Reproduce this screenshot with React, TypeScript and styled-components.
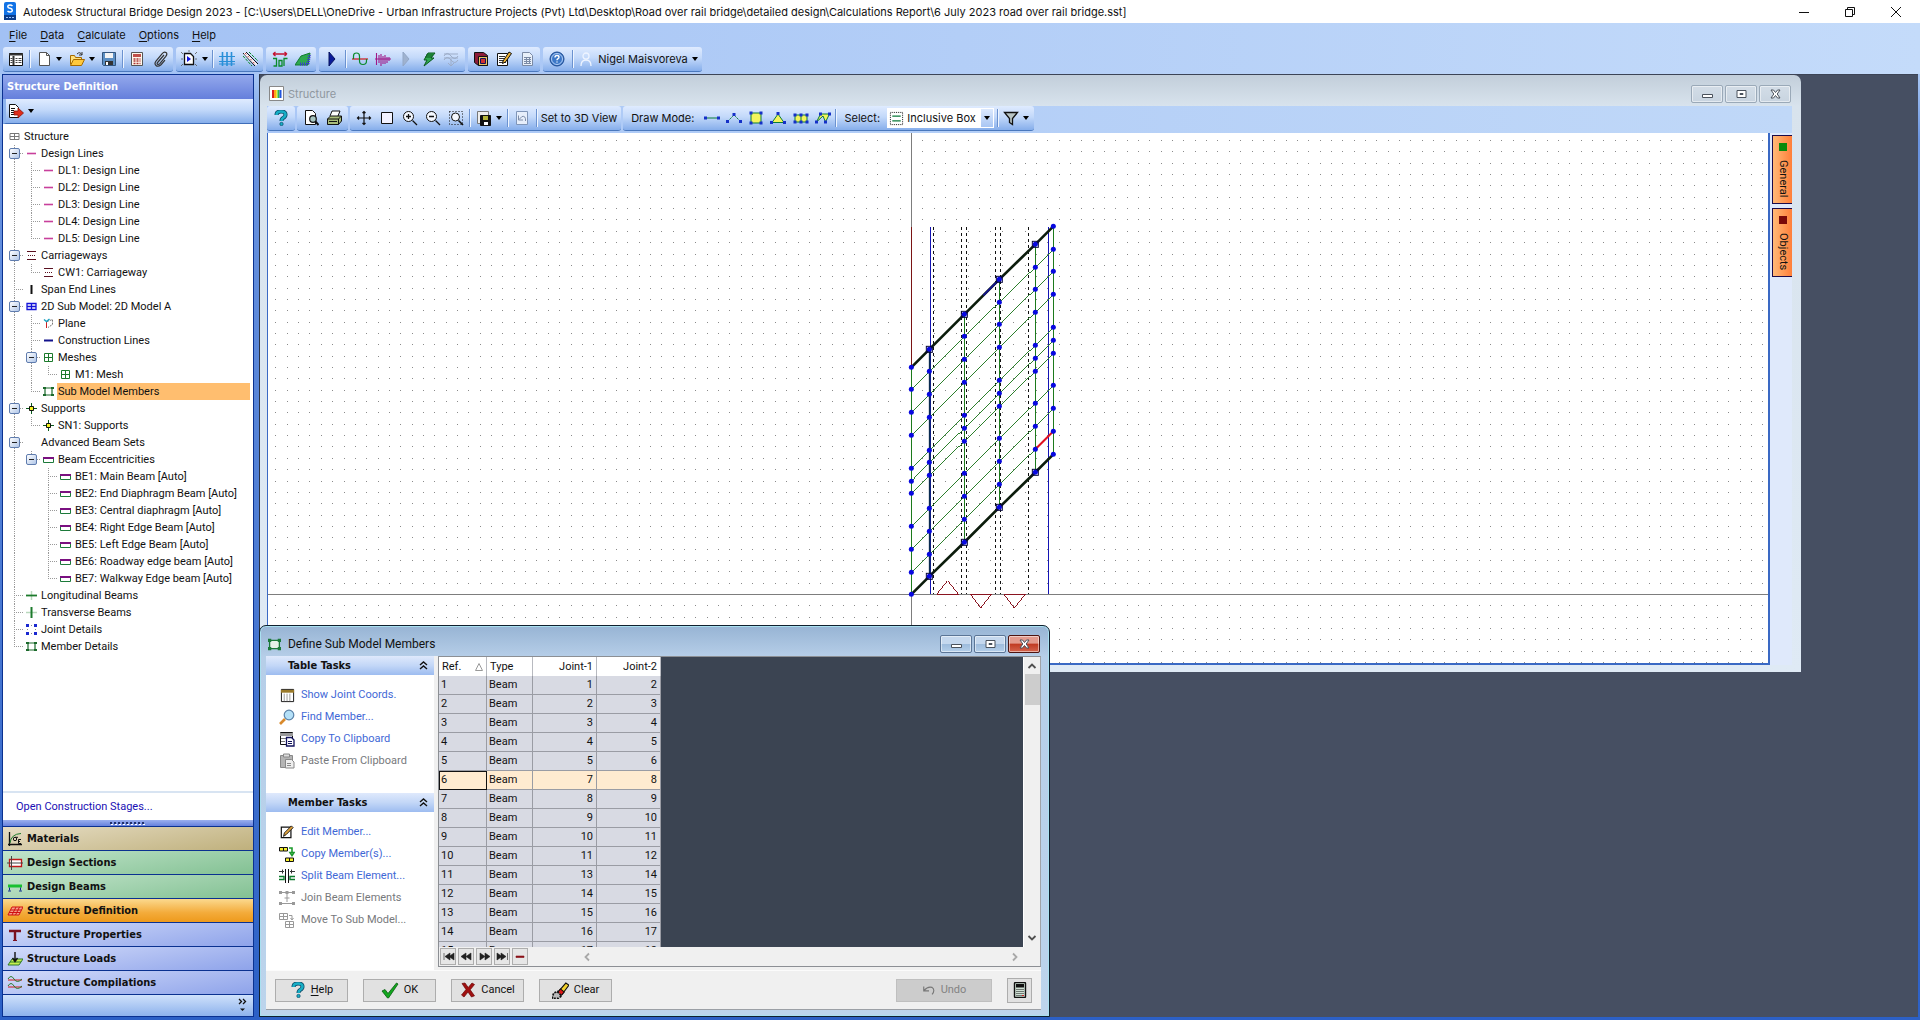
import React from 'react';
import styled, { createGlobalStyle, css } from 'styled-components';

const UI = '"Inter", "Open Sans", sans-serif';
const FORM = '"Roboto", "Liberation Sans", sans-serif';
const HEAVY = '"DejaVu Sans Condensed", "DejaVu Sans", sans-serif';
const BAR = 'linear-gradient(#dfebff, #c3d9fa 45%, #86aeeb)';

const Global = createGlobalStyle`
  * { box-sizing: border-box; }
  body { margin: 0; font: 11px/16px ${FORM}; color: #111; }
  button { font: inherit; color: inherit; margin: 0; padding: 0; border: 0; background: none; }
  svg { display: block; flex: none; }
  u { text-underline-offset: 2px; }
`;

/* ---------- frame ---------- */
const Page = styled.div`
  display: flex;
  flex-direction: column;
  min-height: 100vh;
  background: linear-gradient(90deg, #a2c1f4, #c4dbfa);
`;
const TitleBar = styled.header`
  display: flex;
  align-items: center;
  gap: 6px;
  height: 23px;
  padding: 0 8px 0 3px;
  background: #fff;
  font-family: ${UI};
`;
const TitleText = styled.h1`
  flex: 1;
  margin: 0;
  font: 400 11px/16px ${UI};
  white-space: nowrap;
`;
const SysButtons = styled.div`
  display: flex;
  gap: 14px;
`;
const SysButton = styled.button`
  display: grid;
  place-items: center;
  width: 32px;
  height: 20px;
`;
const MenuBar = styled.nav`
  display: flex;
  gap: 13px;
  height: 23px;
  padding: 4px 9px 0;
  font-family: ${UI};
`;
const MenuItem = styled.button`
  white-space: nowrap;
  height: 16px;
`;
const ToolRow = styled.div`
  display: flex;
  gap: 3px;
  height: 28px;
  padding: 1px 3px 2px;
`;
const ToolGroup = styled.div<{ $w?: number }>`
  display: flex;
  align-items: center;
  justify-content: space-around;
  ${p => p.$w && css`width: ${p.$w}px;`}
  padding: 0 2px;
  border-radius: 3px;
  border-bottom: 1px solid #4a78bd;
  background: ${BAR};
  font-family: ${UI};
  white-space: nowrap;
`;
const Tool = styled.button<{ $drop?: boolean }>`
  display: flex;
  align-items: center;
  justify-content: center;
  gap: 4px;
  height: 22px;
  min-width: ${p => (p.$drop ? 30 : 20)}px;
`;
const Sep = styled.i`
  width: 2px;
  height: 18px;
  border-left: 1px solid #6b92d0;
  background: #eef5ff;
`;
const Caret = styled.i`
  width: 0;
  height: 0;
  border: 3px solid transparent;
  border-top: 4px solid #000;
  border-bottom: 0;
`;
const Main = styled.main`
  flex: 1;
  display: flex;
  gap: 5px;
  padding: 0 2px 3px;
  background: linear-gradient(#a9c8f5, #6a94e0 7%, #2c60c6);
`;

/* ---------- sidebar ---------- */
const Sidebar = styled.aside`
  display: flex;
  flex-direction: column;
  width: 252px;
  border: 1px solid #0a3190;
  background: #fff;
`;
const SideTitle = styled.h2`
  margin: 0;
  height: 24px;
  padding: 0 4px;
  color: #fff;
  background: linear-gradient(#93a8ec, #657fdc);
  font: 700 11px/23px ${HEAVY};
`;
const SideTools = styled.div`
  display: flex;
  align-items: center;
  height: 25px;
  padding: 0 2px;
  border-bottom: 1px solid #3f6db8;
  border-left: 3px solid #8db4ee;
  background: ${BAR};
`;
const Tree = styled.ul`
  flex: 1;
  margin: 0;
  padding: 4px 3px 0;
  list-style: none;
`;
const TreeRow = styled.li`
  display: flex;
  height: 17px;
`;
type GuideKind = 'line' | 'tee' | 'end' | 'none';
const dotsV = 'repeating-linear-gradient(#999 0 1px, transparent 1px 2px)';
const dotsH = 'repeating-linear-gradient(90deg, #999 0 1px, transparent 1px 2px)';
const guides: Record<GuideKind, string> = {
  none: 'none',
  line: `${dotsV} 8px 0 / 1px 17px no-repeat`,
  tee: `${dotsV} 8px 0 / 1px 17px no-repeat, ${dotsH} 8px 8px / 9px 1px no-repeat`,
  end: `${dotsV} 8px 0 / 1px 9px no-repeat, ${dotsH} 8px 8px / 9px 1px no-repeat`,
};
const Guide = styled.span<{ $kind: GuideKind }>`
  flex: none;
  width: 17px;
  background: ${p => guides[p.$kind]};
`;
const Expander = styled.button`
  display: grid;
  place-items: center;
  width: 11px;
  height: 11px;
  margin: 3px;
  border: 1px solid #5f7cae;
  border-radius: 2px;
  background: linear-gradient(135deg, #fff, #b0c6e8);
`;
const TreeIcon = styled.span`
  display: grid;
  place-items: center;
  flex: none;
  width: 17px;
`;
const TreeLabel = styled.span<{ $on?: boolean }>`
  flex: 1;
  padding-left: 1px;
  line-height: 17px;
  white-space: nowrap;
  background: ${p => (p.$on ? '#ffbe6f' : 'none')};
`;
const Stages = styled.div`
  height: 29px;
  padding: 6px 13px 0;
  border-top: 2px solid #d8e4f2;
`;
const StagesLink = styled.a`
  color: #1a10b4;
  text-decoration: none;
`;
const Grip = styled.div`
  display: grid;
  place-items: center;
  height: 6px;
  background: linear-gradient(#9bb0ee, #6681dd);
`;
const navTone = {
  sand: 'linear-gradient(170deg, #e6ddc4, #bfb07c)',
  green: 'linear-gradient(170deg, #c2e4cb, #83c193)',
  gold: 'linear-gradient(#fbd98e, #f3ab3a 60%, #ee9a1c)',
  blue: 'linear-gradient(170deg, #d3dcfa, #8ea3ea)',
};
const NavItem = styled.button<{ $tone: keyof typeof navTone }>`
  display: flex;
  align-items: center;
  gap: 4px;
  height: 24px;
  padding: 0 4px;
  border-top: 1px solid #0a3190;
  background: ${p => navTone[p.$tone]};
  font: 700 11px/16px ${HEAVY};
  text-align: left;
`;
const NavMore = styled.div`
  display: flex;
  justify-content: flex-end;
  height: 22px;
  padding: 3px 6px;
  border-top: 1px solid #0a3190;
  background: linear-gradient(#cfe1fb, #8db2ec);
`;

/* ---------- MDI windows ---------- */
const Desk = styled.section`
  position: relative;
  flex: 1;
  border-top: 1px solid #3c4456;
  border-left: 1px solid #2b3346;
  background: #464f62;
`;
const Win = styled.section<{ $x: number; $y: number; $w: number; $h: number; $active?: boolean }>`
  position: absolute;
  left: ${p => p.$x}px;
  top: ${p => p.$y}px;
  width: ${p => p.$w}px;
  height: ${p => p.$h}px;
  display: flex;
  flex-direction: column;
  padding: ${p => (p.$active ? '0 8px 6px 6px' : '0 9px 7px 7px')};
  border-radius: 7px 7px 0 0;
  background: ${p => (p.$active
    ? 'linear-gradient(#97b4d4, #b6cee8 31px, #bcd4ec)'
    : 'linear-gradient(#c2ceda, #d8e3ed 31px, #dfeaf5)')};
  ${p => p.$active && css`border: 1px solid #10202e; box-shadow: inset 0 0 0 1px #a9e0f0;`}
`;
const WinTitle = styled.div<{ $dim?: boolean }>`
  display: flex;
  align-items: center;
  gap: 4px;
  height: ${p => (p.$dim ? 31 : 30)}px;
  padding: 6px 1px 0 2px;
  color: ${p => (p.$dim ? '#8f979f' : '#111')};
  font-family: ${p => (p.$dim ? UI : FORM)};
  font-size: ${p => (p.$dim ? 11 : 12)}px;
`;
const WinName = styled.h2`
  flex: 1;
  margin: 0;
  font: inherit;
  line-height: 16px;
`;
const WinButtons = styled.div`
  display: flex;
  gap: 2px;
`;
const WinButton = styled.button<{ $tone: 'dim' | 'blue' | 'red' }>`
  display: grid;
  place-items: center;
  width: 32px;
  height: 18px;
  border: 1px solid ${p => ({ dim: '#9aa9b8', blue: '#5b7596', red: '#4d1410' })[p.$tone]};
  border-radius: 2px;
  box-shadow: inset 0 0 0 1px rgba(255, 255, 255, 0.5);
  background: ${p => ({
    dim: 'linear-gradient(#d3dde7, #c8d4e0)',
    blue: 'linear-gradient(#c5d8ee 50%, #9dbbdc 50%, #b4cfea)',
    red: 'linear-gradient(#e39a8d 45%, #c03a22 50%, #d4644e)',
  })[p.$tone]};
`;
const ViewTools = styled.div`
  display: flex;
  gap: 2px;
  height: 27px;
  padding-bottom: 2px;
  background: linear-gradient(90deg, #aac7f6, #c0d8f8);
`;
const Words = styled.span`
  padding: 0 5px;
`;
const Combo = styled.label`
  display: flex;
  align-items: center;
  gap: 3px;
  width: 107px;
  height: 20px;
  padding-left: 2px;
  background: #fff;
`;
const Select = styled.select`
  flex: 1;
  min-width: 0;
  height: 20px;
  padding: 0;
  border: 0;
  appearance: none;
  font: 11px/20px ${UI};
  color: #111;
  background: none;
`;
const ComboDrop = styled.span`
  display: grid;
  place-items: center;
  width: 12px;
  height: 18px;
  margin-right: 1px;
  background: linear-gradient(#dce9fd, #a9c6f3);
`;
const ViewBody = styled.div`
  flex: 1;
  display: flex;
  min-height: 0;
  background: #dfe9fb;
`;
const CanvasBox = styled.div`
  flex: 1;
  min-width: 0;
  overflow: hidden;
  border: solid #3a69c4;
  border-width: 0 2px 2px 1px;
  background: #fff;
`;
const Tabs = styled.div`
  display: flex;
  flex-direction: column;
  gap: 4px;
  width: 22px;
  padding: 2px 0 0 2px;
`;
const Tab = styled.button`
  display: flex;
  align-items: center;
  gap: 9px;
  height: 69px;
  padding: 7px 5px;
  writing-mode: vertical-rl;
  border: 1px solid #1a0a4a;
  border-right: 0;
  background: linear-gradient(90deg, #ffb976, #ff7f3a);
`;
const Swatch = styled.i<{ $c: string }>`
  flex: none;
  width: 8px;
  height: 8px;
  background: ${p => p.$c};
`;

/* ---------- dialog ---------- */
const DialogBody = styled.div`
  flex: 1;
  display: flex;
  gap: 4px;
  min-height: 0;
  background: #f0f0f0;
`;
const Tasks = styled.div`
  width: 168px;
  background: #fff;
`;
const TaskHead = styled.h3`
  display: flex;
  align-items: center;
  justify-content: space-between;
  height: 19px;
  margin: 0 0 9px;
  padding: 0 6px 0 22px;
  background: linear-gradient(#dfe9fc, #c3d7f7 50%, #9dbcf0);
  font: 700 11px/18px ${HEAVY};
`;
const TaskList = styled.ul`
  margin: 0 0 21px;
  padding: 0 0 0 12px;
  list-style: none;
`;
const Task = styled.button`
  display: flex;
  align-items: center;
  gap: 6px;
  height: 22px;
  padding-left: 1px;
  color: #3f68d6;
  white-space: nowrap;
  &:disabled { color: #77797c; }
`;
const GridBox = styled.div`
  flex: 1;
  display: grid;
  grid-template: 1fr 19px / 1fr 17px;
  min-width: 0;
  margin-bottom: 3px;
  border: 1px solid #8c8f94;
  border-right-color: #a0a3a8;
`;
const GridView = styled.div`
  overflow: hidden;
  min-height: 0;
  background: #3b4452;
`;
const DataTable = styled.table`
  width: 222px;
  table-layout: fixed;
  border-collapse: separate;
  border-spacing: 0;
`;
const Th = styled.th<{ $num?: boolean; $w: number }>`
  width: ${p => p.$w}px;
  height: 19px;
  padding: 0 3px;
  border-right: 1px solid #b8bac0;
  background: #fff;
  font-weight: 400;
  line-height: 18px;
  text-align: ${p => (p.$num ? 'right' : 'left')};
`;
const HeadCell = styled.span`
  display: flex;
  align-items: center;
  justify-content: space-between;
`;
const Td = styled.td<{ $num?: boolean; $on: boolean; $focus?: boolean }>`
  height: 19px;
  padding: 0 3px 0 2px;
  border-right: 1px solid #9a9ca4;
  border-bottom: 1px solid #9a9ca4;
  background: ${p => (p.$on ? '#ffebd0' : '#d8dae3')};
  line-height: 18px;
  text-align: ${p => (p.$num ? 'right' : 'left')};
  ${p => p.$focus && css`outline: 1px solid #111; outline-offset: -1px;`}
`;
const ScrollV = styled.div`
  display: flex;
  flex-direction: column;
  align-items: center;
  padding: 4px 1px;
  background: #f0f0f0;
  border-left: 1px solid #fff;
`;
const Thumb = styled.div`
  flex: none;
  width: 15px;
  height: 31px;
  margin-top: 3px;
  background: #cdcdcd;
`;
const Fill = styled.span`
  flex: 1;
`;
const NavBar = styled.div`
  display: flex;
  align-items: center;
  gap: 2px;
  padding: 0 3px 0 1px;
  background: #f0f0f0;
`;
const NavButton = styled.button`
  display: grid;
  place-items: center;
  width: 16px;
  height: 17px;
  border: 1px solid #adadad;
  background: #e6e6e6;
`;
const ScrollH = styled.div`
  flex: 1;
  display: flex;
  justify-content: space-between;
  padding-left: 52px;
`;
const Footer = styled.footer`
  display: flex;
  align-items: center;
  gap: 15px;
  height: 40px;
  padding: 0 9px;
  border-bottom: 1px solid #9b9fa5;
  border-top: 1px solid #fbfbfb;
  background: #f0f0f0;
`;
const Push = styled.button<{ $w: number }>`
  display: flex;
  align-items: center;
  justify-content: center;
  gap: 5px;
  width: ${p => p.$w}px;
  height: ${p => (p.$w < 30 ? 25 : 23)}px;
  border: 1px solid #adadad;
  background: #e1e1e1;
  &:disabled { background: #ccc; border-color: #bfbfbf; color: #838383; }
`;

/* ---------- drawings ---------- */
type P = { children: React.ReactNode; s?: number; v?: string };
const Ic = ({ children, s = 16, v = '0 0 16 16' }: P) => (
  <svg width={s} height={s} viewBox={v} fill="none" stroke="#111" aria-hidden="true">{children}</svg>
);
const page = 'M3.5 1.5h7l3 3v10h-10z';
const hook = 'M3.500 5q0-3.500 4.500-3.500T12.500 4.700q0 2-2.300 3.200Q8.500 8.800 8.500 11';

const I = {
  logo: <svg width="14" height="20" viewBox="0 0 14 20" aria-hidden="true"><path d="M1 2q0-2 2-2h8q2 0 2 2v16H1z" fill="#1273e6" /><path d="M1 13h12v5H1z" fill="#0a3d8c" /><path d="M9.500 4Q8.500 3 7 3 4.800 3 4.800 4.700 4.800 6 7 6.300T9.300 8.300Q9.300 10 7 10 5.500 10 4.500 9" fill="none" stroke="#fff" strokeWidth="1.500" /><path d="M3 15.500h8" stroke="#9cc4ff" strokeDasharray="2 1" /></svg>,
  layout: <Ic><path d="M1.500 2.500h13v12h-13z" fill="#fff" /><path d="M1 3.500h14M5.500 5v9" strokeWidth="2" stroke="#333" /><path d="M7.500 7.500h2m1 0h3m-6 2h2m1 0h3m-6 2h2m1 0h3M2.500 7.500h2m-2 2h2m-2 2h2" stroke="#444" /></Ic>,
  page: <Ic><path d={page} fill="#fff" stroke="#555" /><path d="M10.500 1.500v3h3" stroke="#555" /></Ic>,
  open: <Ic><path d="M1.500 13.500v-9h4l1 2h6v2" fill="#ffe07a" stroke="#a66a00" /><path d="M1.500 14.500l3-6h11l-3 6z" fill="#ffc93c" stroke="#a66a00" /><path d="M8 3q3-3 5 1m0-3v3h-3" stroke="#333" /></Ic>,
  save: <Ic><path d="M1.500 1.500h13v13h-12l-1-1z" fill="#5c8fc4" stroke="#33567f" /><path d="M4 2h8v5H4z" fill="#f4f4f4" stroke="none" /><path d="M4 10h8v4H4z" fill="#333" stroke="none" /><path d="M5 11h2v3H5z" fill="#fff" stroke="none" /></Ic>,
  calcRed: <Ic><path d="M2.500 1.500h11v13h-11z" fill="#fff8ec" stroke="#555" /><path d="M4 3h8v3H4z" fill="#c0504b" stroke="none" /><path d="M4.500 8h7m-7 2h7m-7 2.500h7" stroke="#a33" strokeDasharray="2 1" strokeWidth="1.300" /></Ic>,
  clip: <Ic><path d="M12 4L6 11q-1.500 1.500-.5 2.200t2.300-.6l6-7.200q2-2.600.2-3.800t-3.800 1L4 10q-2 2.800 0 4.500t5-.8l4-4.500" stroke="#333" strokeWidth="1.200" /></Ic>,
  runDoc: <Ic s={18} v="-1 -1 18 18"><path d="M3.500 2.500h6l3 3v8h-9z" fill="#fff" strokeWidth="1.300" /><path d="M6 5v6l4-3z" fill="#1414e0" stroke="none" /><path d="M0 1l2 2M8-1v2M16 1l-2 2M0 8h2M16 8h-2M0 15l2-2M16 15l-2-2" stroke="#555" strokeWidth=".8" /></Ic>,
  fence: <Ic><path d="M0 5.500h16M0 10.500h16M0 13h16" stroke="#2a8fd8" strokeWidth="1.200" /><path d="M3.500 1v14M8 1v14M12.500 1v14" stroke="#2a8fd8" strokeWidth="1.600" /></Ic>,
  road: <Ic><path d="M1 2l12 13M4 1l12 12" stroke="#111" /><path d="M2.500 2l12 12" stroke="#fff" strokeWidth="2" /><path d="M1 5l9 10M7 1l9 9" stroke="#0a8a2a" strokeDasharray="3 1" /><path d="M3 2l11 12" stroke="#c33" strokeDasharray="2 2" /></Ic>,
  spans: <Ic><path d="M2 3h12M1 3l2.500-2M1 3l2.500 2M15 3l-2.500-2M15 3l-2.500 2" stroke="#c41230" strokeWidth="1.300" /><path d="M1 7.500h3.500V15H1.500M7 15V9.500h3V15zM12 15V7.500h3.500" stroke="#0a8a2a" strokeWidth="1.300" /></Ic>,
  surface: <Ic><path d="M0 14L6 5l9-3-2 12z" fill="#2ea84f" stroke="#127a30" /><path d="M5 13h8l1.500-9" fill="none" stroke="#3a3ad0" strokeWidth="3" strokeDasharray="1 1" /></Ic>,
  play: <Ic><path d="M5 1v14l6-7z" fill="#0a1a9a" stroke="#06125c" /></Ic>,
  playOff: <Ic><path d="M5 1v14l6-7z" fill="#9fb2cf" stroke="#93a7c6" /></Ic>,
  wave: <Ic><path d="M0 8h16" stroke="#d01818" strokeWidth="1.200" /><path d="M1.500 8V5q0-3 3-3t3 3v5q0 3.500 3.500 3.500T14.500 10V8" stroke="#0a8a2a" strokeWidth="1.200" /></Ic>,
  pulse: <Ic><path d="M0 8h16M1.500 2v12M4 4v8M6 3v12M8 5v8M10 4v9M12 6v6M14 6v4" stroke="#a01888" strokeWidth="1.100" /></Ic>,
  bolt: <Ic><path d="M7 2h7l-4 5h3L3 15l3-6H3z" fill="#2ea84f" stroke="#0a5a1e" /><path d="M5 4h7M4 6h7" stroke="#0a5a1e" /></Ic>,
  waveOff: <Ic><path d="M1 3h14M1 7h14M8 8v7m-3-3l3 3 3-3" stroke="#9dadc8" /><path d="M1 5q3-5 7 0t7 0M1 9q3-5 7 0t7 0" stroke="#9dadc8" /></Ic>,
  cubes: <Ic><path d="M1.500 1.500h9l4 3v10h-9l-4-3z" fill="#8c1c3a" /><path d="M5.500 5.500h9v9h-9z" fill="#e8c060" /><path d="M7.500 7.500h5v5h-5z" fill="#d03030" stroke="#12125c" /></Ic>,
  note: <Ic><path d="M1.500 2.500h10v12h-10z" fill="#fff" /><path d="M3 5.500h6m-6 2h6m-6 2h5m-5 2h7" stroke="#333" /><path d="M7 10l6-9 2.500 1.500L9.500 11l-3 1.500z" fill="#f1b434" /></Ic>,
  sheetOff: <Ic><path d={page} fill="#e8f0fa" stroke="#7a8aa5" /><path d="M5 6.500h7m-7 2h7m-7 2h7m-7 2h7M7.500 6v7m3-7v7" stroke="#7a8aa5" /></Ic>,
  helpRound: <Ic><circle cx="8" cy="8" r="7" fill="#3c78c8" stroke="#1c4a90" /><circle cx="8" cy="8" r="5.500" stroke="#cfe2ff" strokeWidth=".8" /><path d="M6 6.500q0-2 2-2t2 1.700q0 1-1.200 1.600-.8.500-.8 1.400m0 1.300v1" stroke="#fff" strokeWidth="1.400" /></Ic>,
  person: <Ic><circle cx="8" cy="5" r="3" stroke="#eef4ff" strokeWidth="1.300" /><path d="M3 15q0-6 5-6t5 6" stroke="#eef4ff" strokeWidth="1.300" /></Ic>,
  exit: <Ic><path d="M1.500 1.500h6l3 3v10h-9z" fill="#fff" /><path d="M3 5.500h4m-4 2h3m-3 2h3m-3 2h3" /><path d="M6 8h4V5l5.500 5-5.500 5v-3H6z" fill="#e02c1a" stroke="#8c1208" strokeWidth=".8" /></Ic>,
  rainbow: <svg width="15" height="15" viewBox="0 0 15 15" aria-hidden="true"><path d="M.5.500h14v14H.5z" fill="#fff" stroke="#888" /><path d="M3 4h2v8H3z" fill="#d81e1e" /><path d="M5 4h2v8H5z" fill="#ffa51a" /><path d="M7 4h1.500v8H7z" fill="#f4e82c" /><path d="M8.500 4h2v8h-2z" fill="#35b44a" /><path d="M10.500 4h2v8h-2z" fill="#2255dd" /></svg>,
  question: <Ic><path d={hook} stroke="#0b4a66" strokeWidth="4" /><path d={hook} stroke="#17aec6" strokeWidth="2.600" /><circle cx="8.500" cy="14" r="1.700" fill="#17aec6" stroke="#0b4a66" strokeWidth=".7" /></Ic>,
  preview: <Ic><path d="M2.500.500h7l3 3v11h-10z" fill="#fff" /><circle cx="10" cy="9" r="3.300" fill="#a7c5c0" strokeWidth="1.200" /><path d="M12.500 11.500l3 3.500" strokeWidth="2" /></Ic>,
  print: <Ic><path d="M4 6l2-5h8l-2 5" fill="#fff" /><path d="M1.500 9l3-3h11v5l-3 3.500h-11z" fill="#a9bd7a" /><path d="M1.500 9h11v5.500M12.500 9l3-3M3 11.500h8" /></Ic>,
  move: <Ic><path d="M8 1.500v13M1.500 8h13M6.500 3L8 1.500 9.500 3M6.500 13L8 14.500 9.500 13M3 6.500L1.500 8 3 9.500M13 6.500L14.500 8 13 9.500" strokeWidth="1.200" /></Ic>,
  rect: <Ic><path d="M2.500 2.500h11v11h-11z" fill="#f2f2ff" /></Ic>,
  zoomIn: <Ic><circle cx="6.500" cy="6.500" r="5" fill="#f4f8ff" /><path d="M4 6.500h5M6.500 4v5M10.500 10.500l4.500 4.500" strokeWidth="1.300" /></Ic>,
  zoomOut: <Ic><circle cx="6.500" cy="6.500" r="5" fill="#f4f8ff" /><path d="M4 6.500h5M10.500 10.500l4.500 4.500" strokeWidth="1.300" /></Ic>,
  zoomBox: <Ic><path d="M1.500 1.500h13v13h-13z" strokeDasharray="1 2" /><circle cx="7.500" cy="7" r="4" fill="#f4f8ff" /><path d="M10.500 10.500l4.500 4.500" strokeWidth="1.600" /></Ic>,
  saveView: <Ic><path d="M1.500 1.500h11v12h-11z" fill="#eee" stroke="#777" /><path d="M4.500 5.500h10v10h-10z" fill="#111" /><path d="M7 6h5v4H7z" fill="#b4b43a" stroke="none" /><path d="M8 12h4v3H8z" fill="#fff" stroke="none" /></Ic>,
  backOff: <Ic><path d="M2.500 1.500h11v13h-11z" stroke="#7f95b8" fill="#e6eefb" /><path d="M4.500 5.500v4.500h4.500M5 9.500L8 6.500q4-1 3.500 4.500" stroke="#7c8ca8" /></Ic>,
  filter: <Ic><path d="M1.500 2.500h13L9.500 8.500v6l-3-2v-4z" fill="#b8c4c4" strokeWidth="1.300" /></Ic>,
  incl: <Ic s={15}><path d="M1.500 1.500h13v13h-13z" strokeDasharray="1 1" /><path d="M3.500 5.500h9m-9 5h9" stroke="#0a7a3a" strokeWidth="1.400" /></Ic>,
  undo: <Ic s={14}><path d="M2 4v5h6M2.500 8.500q4-5 9-3.500 4 3 0 8" stroke="#777" strokeWidth="1.300" /></Ic>,
  calc: <Ic s={16}><path d="M3.500.500h9q1 0 1 1v13q0 1-1 1h-9q-1 0-1-1v-13q0-1 1-1z" fill="#cfe0d4" strokeWidth="1.400" /><path d="M4 2h8v3.500H4z" fill="#111" stroke="none" /><path d="M4.500 7.500h7m-7 2h7m-7 2h7m-7 2h7" strokeDasharray="1 1" /><path d="M10 13.500h2" stroke="#d02020" /></Ic>,
  ok: <Ic s={18} v="0 0 18 18"><path d="M1 10l3-1.500 3 4L15.500 2 17 3 7.500 17h-1z" fill="#12a81e" stroke="#0a5a10" strokeWidth=".8" /></Ic>,
  cancel: <Ic><path d="M2 1.500l3-.5 3.200 4.500L12 1l2.500 1.500-4.300 5.300 4.300 6-3 1.200-3.500-5-4 5L1.500 13 6 7.500z" fill="#a01010" stroke="#6a0606" strokeWidth=".7" /></Ic>,
  clear: <Ic s={17}><path d="M6 9l7-8 3 2-6.500 8.500z" fill="#f4d22c" /><path d="M5 10l3-3.500 3.500 3L8.500 13z" fill="#e01818" /><path d="M0 15.500l1.500-5L5 9l4 4-3 2.500z" fill="#bbb" stroke="#111" strokeWidth="1.600" strokeDasharray="2 1" /></Ic>,
  form: <Ic s={15}><path d="M1.500 1.500h13v13h-13z" fill="#fff" /><path d="M1 2h14v3H1z" fill="#9a7a2a" stroke="none" /><path d="M4.500 6v8m3-8v8m3-8v8" stroke="#999" /></Ic>,
  find: <Ic><path d="M1 15l5-5" stroke="#d98a2c" strokeWidth="2.600" /><circle cx="10" cy="6" r="4.800" fill="#b4e0f8" stroke="#5a82a8" strokeWidth="1.200" /></Ic>,
  copy: <Ic><path d="M1.500 1.500h12v12h-12z" fill="#fff" /><path d="M1 2h13v3H1z" fill="#999" stroke="none" /><path d="M2 7.500h5m-5 3h4" stroke="#777" /><path d="M7.500 6.500h5l2.500 2.500v6H7.500z" fill="#fff" stroke="#12125c" strokeWidth="1.300" /><path d="M9 10.500h4m-4 2h4" stroke="#12125c" /></Ic>,
  paste: <Ic><path d="M1.500 2.500h12v12h-12z" fill="#b4b4b4" stroke="#888" /><path d="M4.500 1h6v3h-6z" fill="#ddd" stroke="#888" /><path d="M6.500 6.500h6l2.500 2.500v6H6.500z" fill="#eee" stroke="#888" /><path d="M8 10.500h4m-4 2h4" stroke="#888" /></Ic>,
  edit: <Ic s={14}><path d="M1.500 2.500h11v12h-11z" fill="#fff" strokeWidth="1.400" /><path d="M4 13l1-4 8-8 2 2-8 8z" fill="#e0a23c" /></Ic>,
  copyM: <Ic><path d="M.5 1.500h4v3.500h-4zM4.500 1.500h4v3.500h-4zM6.500 12h4v3.500h-4zM10.500 12h4v3.500h-4z" fill="#f6f02c" /><path d="M10 2h3V7m-2-.5l2 3 2-3z" stroke="#1c9a2c" strokeWidth="1.600" /></Ic>,
  split: <Ic><path d="M6.500 1v14M9.500 1v14" /><path d="M0 3.500h5M3.500 1.500v4M11 3.500h5M12.500 1.500v4" stroke="#333" /><path d="M0 8.500h5v3H0m16-3h-5v3h5" stroke="#0a7a2a" strokeWidth="1.400" /></Ic>,
  join: <Ic><path d="M1 2.500h14M1 13.500h14M8 4v8M5.500 8h5" stroke="#999" /><path d="M0 1h3v3H0zM6.500 1h3v3h-3zM13 1h3v3h-3zM0 12h3v3H0zM13 12h3v3h-3z" fill="#999" stroke="none" /></Ic>,
  moveOff: <Ic><path d="M.5 1.500h8v6h-8zM.5 4.500h8M4.500 1.500v6M6.500 9.500h8v6h-8zM6.500 12.500h8M10.500 9.500v6" stroke="#999" /><path d="M10 3.500h3v4m-1.500-1.500L13 8l1.500-2" stroke="#999" /></Ic>,
  link: <Ic s={13}><path d="M2 3h12v10H2z" stroke="#1c7a3a" strokeWidth="1.600" fill="#e6f0e8" /><path d="M0 1h4v4H0zM12 1h4v4h-4zM0 11h4v4H0zM12 11h4v4h-4z" fill="#1c7a3a" stroke="none" /></Ic>,
  chev: <svg width="9" height="9" viewBox="0 0 9 9" fill="none" stroke="#111" strokeWidth="1.400" aria-hidden="true"><path d="M1 4l3.500-3L8 4M1 8l3.500-3L8 8" /></svg>,
};

const draw = {
  line: <Ic><path d="M1 8h14" stroke="#0a7a3a" /><path d="M0 6.500h3v3H0zM13 6.500h3v3h-3z" fill="#1430c8" stroke="none" /></Ic>,
  poly: <Ic><path d="M2 11l6-6 6 6" stroke="#0a7a3a" strokeDasharray="2 1" /><path d="M0 10h3v3H0zM6.500 3h3v3h-3zM13 10h3v3h-3z" fill="#1430c8" stroke="none" /></Ic>,
  box: <Ic><path d="M3 3h10v10H3z" fill="#f4f45c" stroke="#0a7a3a" /><path d="M1.500 1.500h3v3h-3zM11.500 1.500h3v3h-3zM1.500 11.500h3v3h-3zM11.500 11.500h3v3h-3z" fill="#1430c8" stroke="none" /></Ic>,
  tri: <Ic><path d="M2 12.500L8 4l6 8.500z" fill="#f4f45c" stroke="#0a7a3a" /><path d="M0 11h3v3H0zM6.500 2h3v3h-3zM13 11h3v3h-3z" fill="#1430c8" stroke="none" /></Ic>,
  pair: <Ic><path d="M2 5h12v7H2zM8 5v7" fill="#f4f45c" stroke="#0a7a3a" /><path d="M.5 3.500h3v3h-3zM6.500 3.500h3v3h-3zM12.500 3.500h3v3h-3zM.5 10.500h3v3h-3zM6.500 10.500h3v3h-3zM12.500 10.500h3v3h-3z" fill="#1430c8" stroke="none" /></Ic>,
  skew: <Ic><path d="M1.500 12L5.500 4h9l-4 8L8 6z" fill="#f4f45c" stroke="#0a7a3a" /><path d="M0 10.500h3v3H0zM4 2.500h3v3H4zM13 2.500h3v3h-3zM9 10.500h3v3H9z" fill="#1430c8" stroke="none" /></Ic>,
};

const T = (c: React.ReactNode) => <Ic s={11} v="0 0 11 11">{c}</Ic>;
const treeIcons: Record<string, React.ReactNode> = {
  none: null,
  root: T(<path d="M1 2.500h9v6H1zM1 5.500h9M5.500 2.500v6" stroke="#777" />),
  dl: T(<path d="M1 5.500h9" stroke="#c8409c" strokeWidth="1.600" />),
  cw: T(<><path d="M1 1.500h9M1 9.500h9" stroke="#5a1020" /><path d="M2 5.500h8" stroke="#5a1020" strokeDasharray="1 1" /></>),
  span: T(<path d="M5.500 1v9" strokeWidth="2" />),
  model: T(<path d="M1 2.500h9v6H1zM1 5.500h9M5.500 2.500v6" stroke="#1414d8" strokeWidth="1.300" />),
  plane: T(<><path d="M4 3.500L9.500 1.500v5L5 9.500" stroke="#777" strokeDasharray="2 1" /><path d="M3.500 3v7" stroke="#d02020" /><path d="M1 1.500l2.500 2 3-2.500" stroke="#18a0c0" strokeWidth="1.400" /></>),
  con: T(<path d="M1 5.500h9" stroke="#12128c" strokeWidth="2" />),
  mesh: T(<path d="M1.500 1.500h8v8h-8zM1.500 5.500h8M5.500 1.500v8" stroke="#1c7a2c" />),
  member: T(<><path d="M1.500 2h8M1.500 9h8M2 1.500v8M9 1.500v8" stroke="#1c6a2c" strokeWidth="1.200" /><path d="M0 1h3v2H0zM8 1h3v2H8zM0 8h3v2H0zM8 8h3v2H8z" fill="#1c6a2c" stroke="none" /></>),
  sup: T(<><path d="M5.500 0v11M0 5.500h11" stroke="#0a5a1a" /><path d="M3.500 3.500h4v4h-4z" fill="#f4f020" /></>),
  be: T(<><path d="M.5 3.500h10v5H.5z" fill="#fff" stroke="#1c7a3a" /><path d="M0 4h11" stroke="#7a1080" strokeWidth="2" /></>),
  lng: T(<><path d="M5.500 1v9" stroke="#b8d8bc" strokeWidth="1.500" /><path d="M0 5.500h11" stroke="#1c7a2c" strokeWidth="1.800" /></>),
  trn: T(<><path d="M0 5.500h11" stroke="#b8d8bc" strokeWidth="1.500" /><path d="M5.500 0v11" stroke="#1c7a2c" strokeWidth="2" /></>),
  joint: T(<><path d="M2 1.500h8M2 9.500h8M1.500 2v8M9.500 2v8" stroke="#888" strokeDasharray="1 2" /><path d="M0 0h3v3H0zM8 0h3v3H8zM0 8h3v3H0zM8 8h3v3H8z" fill="#1a28d0" stroke="none" /></>),
};

/* level, icon, label, expandable */
const tree: [number, string, string, boolean?][] = [
  [0, 'root', 'Structure'],
  [1, 'dl', 'Design Lines', true],
  [2, 'dl', 'DL1: Design Line'],
  [2, 'dl', 'DL2: Design Line'],
  [2, 'dl', 'DL3: Design Line'],
  [2, 'dl', 'DL4: Design Line'],
  [2, 'dl', 'DL5: Design Line'],
  [1, 'cw', 'Carriageways', true],
  [2, 'cw', 'CW1: Carriageway'],
  [1, 'span', 'Span End Lines'],
  [1, 'model', '2D Sub Model: 2D Model A', true],
  [2, 'plane', 'Plane'],
  [2, 'con', 'Construction Lines'],
  [2, 'mesh', 'Meshes', true],
  [3, 'mesh', 'M1: Mesh'],
  [2, 'member', 'Sub Model Members'],
  [1, 'sup', 'Supports', true],
  [2, 'sup', 'SN1: Supports'],
  [1, 'none', 'Advanced Beam Sets', true],
  [2, 'be', 'Beam Eccentricities', true],
  [3, 'be', 'BE1: Main Beam [Auto]'],
  [3, 'be', 'BE2: End Diaphragm Beam [Auto]'],
  [3, 'be', 'BE3: Central diaphragm [Auto]'],
  [3, 'be', 'BE4: Right Edge Beam [Auto]'],
  [3, 'be', 'BE5: Left Edge Beam [Auto]'],
  [3, 'be', 'BE6: Roadway edge beam [Auto]'],
  [3, 'be', 'BE7: Walkway Edge beam [Auto]'],
  [1, 'lng', 'Longitudinal Beams'],
  [1, 'trn', 'Transverse Beams'],
  [1, 'joint', 'Joint Details'],
  [1, 'member', 'Member Details'],
];

function continues(row: number, level: number) {
  for (let j = row + 1; j < tree.length; j++) {
    if (tree[j][0] < level) return false;
    if (tree[j][0] === level) return true;
  }
  return false;
}
function guideFor(row: number, col: number): GuideKind {
  const more = continues(row, col + 1);
  if (col === tree[row][0] - 1) return more ? 'tee' : 'end';
  return more ? 'line' : 'none';
}

const nav: [keyof typeof navTone, string, React.ReactNode][] = [
  ['sand', 'Materials', <><path d="M2.500 1v14M1 13.500h14" strokeWidth="1.300" /><path d="M3 12Q4 3 14 2.500" stroke="#1c7a2c" /><circle cx="8" cy="8" r="1.700" /><path d="M8 6.300h3M14 8.500h-2.500v4H14m-2.500-2H13" /></>],
  ['green', 'Design Sections', <><path d="M2.500 4.500h12v7h-12z" stroke="#c01818" fill="#fff" strokeWidth="1.300" /><path d="M0 8h16M4.500 1v14" stroke="#444" /></>],
  ['green', 'Design Beams', <><path d="M1 7h14" stroke="#18c030" strokeWidth="3" /><path d="M2.500 8.500v3m11-3v3M1 12h3m8 0h3" stroke="#12308c" /></>],
  ['gold', 'Structure Definition', <><path d="M1 12l4-8h11l-4 8z" fill="#f5a08a" stroke="#d01010" /><path d="M2 9.500h11M3.500 7h11M5 12l4-8M8.500 12l4-8" stroke="#d01010" /></>],
  ['blue', 'Structure Properties', <><path d="M2 4h12M8 4v9" stroke="#7a1020" strokeWidth="2.400" /><path d="M6 13.500h4" stroke="#7a1020" /></>],
  ['blue', 'Structure Loads', <><path d="M1 14l4-6h11l-4 6z" fill="#c8ee50" stroke="#2c7a2c" /><path d="M3 11h11" stroke="#2c7a2c" /><path d="M8 1v9M5.500 7L8 10.500 10.500 7" strokeWidth="1.400" /></>],
  ['blue', 'Structure Compilations', <><path d="M1 5h14M1 12h14" stroke="#d01818" /><path d="M1 4q3-5 6 0t8 0M1 11q3-5 6 0t8 0" stroke="#2c7a2c" /></>],
];

/* joint coordinates of the skewed deck, three units to a pixel */
const cols = [94, 148, 253, 358, 466, 520];
const joints = [
  [502, 568, 637, 706, 805, 844, 880, 979, 1048, 1117, 1183],
  [448, 514, 583, 652, 751, 787, 826, 925, 994, 1063, 1129],
  [343, 409, 478, 547, 646, 685, 724, 820, 889, 958, 1027],
  [238, 307, 373, 442, 541, 580, 619, 715, 784, 853, 922],
  [133, 202, 268, 337, 436, 475, 514, 610, 679, 748, 817],
  [79, 148, 214, 283, 382, 421, 460, 556, 625, 694, 763],
];
const AXIS_X = 643;
const AXIS_Y = 461;
const STEP = 11.35;
let dotPath = '';
for (let j = -40; j <= 17; j++) {
  for (let i = -56; i <= 76; i++) {
    dotPath += `M${Math.round(AXIS_X + i * STEP)} ${Math.round(AXIS_Y + j * STEP)}h1`;
  }
}
const rowPoints = (r: number) => cols.map((x, c) => `${x},${joints[c][r]}`).join(' ');

function Drawing() {
  return (
    <svg width="1500" height="532" viewBox="0 0 1500 532" fill="none" role="img" aria-label="Plan of the bridge deck">
      <path d={dotPath} stroke="#8a8a8a" transform="translate(0 .5)" shapeRendering="crispEdges" />
      <path d={`M0 ${AXIS_Y}.5H1500M${AXIS_X}.5 0V532`} stroke="#7d7d7d" />
      <g transform="translate(612 67) scale(.33333)">
        <g shapeRendering="crispEdges" strokeWidth="3">
          <path d="M95 81V502" stroke="#7a1414" />
          <path d="M160 81V1183M245 81V1183M260 81V1183M347 81V1183M361 81V1183M446 81V1183" stroke="#111" strokeDasharray="9 9" />
          {cols.map((x, c) => <path key={x} d={`M${x} ${joints[c][0]}V${joints[c][10]}`} stroke="#1c7a1c" />)}
          <path d="M151 81V1183M506 81V1183" stroke="#1414b4" />
          {joints[0].map((_, r) => (r > 0 && r < 10) && <polyline key={r} points={rowPoints(r)} stroke="#2c7f2c" />)}
          <path d="M170 1183L203 1142L236 1183zM272 1183H334L302 1224zM372 1183H436L403 1224z" stroke="#8a1420" />
        </g>
        <path d="M149 448V1129" stroke="#0a2a50" strokeWidth="5" />
        <polyline points={rowPoints(0)} stroke="#0c1c0c" strokeWidth="8" />
        <polyline points={rowPoints(10)} stroke="#0c1c0c" strokeWidth="8" />
        <path d="M310 286L358 238" stroke="#14148c" strokeWidth="6" />
        <path d="M466 748L520 694" stroke="#e01020" strokeWidth="6" />
        {[1, 2, 3, 4].map(c => [0, 10].map(r => (
          <rect key={`${c}-${r}`} x={cols[c] - 9} y={joints[c][r] - 9} width="18" height="18" stroke="#06063c" strokeWidth="3" />
        )))}
        {joints.map((ys, c) => ys.map(y => <circle key={`${c}-${y}`} cx={cols[c]} cy={y} r="7.500" fill="#0808e0" />))}
      </g>
    </svg>
  );
}

const glyph = {
  min: <path d="M2.500 5.500h10v3h-10z" />,
  max: <path d="M3 1.500h9v7H3zM6 4.500h3v1H6z" />,
  close: <path d="M3 1h2.500l2 2.500 2-2.500H12L9.200 5 12 9H9.500l-2-2.500L5.500 9H3l2.800-4z" />,
};
function WinControls({ active }: { active?: boolean }) {
  return (
    <WinButtons>
      {(['min', 'max', 'close'] as const).map(k => (
        <WinButton key={k} aria-label={k} $tone={!active ? 'dim' : k === 'close' ? 'red' : 'blue'}>
          <svg width="15" height="10" viewBox="0 0 15 10" fill="#fff" stroke="#4a525c">{glyph[k]}</svg>
        </WinButton>
      ))}
    </WinButtons>
  );
}

const rows = [[1, 2], [2, 3], [3, 4], [4, 5], [5, 6], [7, 8], [8, 9], [9, 10], [10, 11], [11, 12], [13, 14], [14, 15], [15, 16], [16, 17], [17, 18]];
const tableTasks: [string, React.ReactNode, boolean?][] = [
  ['Show Joint Coords.', I.form], ['Find Member...', I.find], ['Copy To Clipboard', I.copy], ['Paste From Clipboard', I.paste, true],
];
const memberTasks: [string, React.ReactNode, boolean?][] = [
  ['Edit Member...', I.edit], ['Copy Member(s)...', I.copyM], ['Split Beam Element...', I.split], ['Join Beam Elements', I.join, true], ['Move To Sub Model...', I.moveOff, true],
];
const IconSlot = styled.span`
  display: grid;
  place-items: center;
  width: 16px;
`;
function TaskGroup({ title, items }: { title: string; items: [string, React.ReactNode, boolean?][] }) {
  return (
    <>
      <TaskHead>{title}{I.chev}</TaskHead>
      <TaskList>
        {items.map(([t, icon, off]) => <li key={t}><Task disabled={off}><IconSlot>{icon}</IconSlot>{t}</Task></li>)}
      </TaskList>
    </>
  );
}

const recs: [string, string, string][] = [
  ['First', 'M2 2v7M8 2v7L3 5.500zM12 2v7L7 5.500z', '#222'],
  ['Previous', 'M6 2v7L1 5.500zM11 2v7L6 5.500z', '#222'],
  ['Next', 'M2 2v7l5-3.500zM7 2v7l5-3.500z', '#222'],
  ['Last', 'M1 2v7l5-3.500zM5 2v7l5-3.500zM11.500 2v7', '#222'],
  ['Delete', 'M2 5h8v1.500H2z', '#8a1018'],
];
const Arrow = ({ d, c = '#505050' }: { d: string; c?: string }) => (
  <svg width="10" height="10" viewBox="0 0 10 10" fill="none" stroke={c} strokeWidth="1.800"><path d={d} /></svg>
);
const B = ({ i, d, n }: { i: React.ReactNode; d?: boolean; n: string }) => (
  <Tool $drop={d} aria-label={n}>{i}{d && <Caret />}</Tool>
);

export default function App() {
  return (
    <Page>
      <Global />
      <TitleBar>
        {I.logo}
        <TitleText>Autodesk Structural Bridge Design 2023 - [C:\Users\DELL\OneDrive - Urban Infrastructure Projects (Pvt) Ltd\Desktop\Road over rail bridge\detailed design\Calculations Report\6 July 2023 road over rail bridge.sst]</TitleText>
        <SysButtons>
          <SysButton aria-label="Minimise"><svg width="10" height="10" stroke="#111"><path d="M0 5.500h10" /></svg></SysButton>
          <SysButton aria-label="Restore"><svg width="10" height="10" fill="none" stroke="#111"><path d="M.5 2.500h7v7h-7zM2.500 2V.5h7v7H8" /></svg></SysButton>
          <SysButton aria-label="Close"><svg width="10" height="10" stroke="#111"><path d="M0 0l10 10M10 0L0 10" /></svg></SysButton>
        </SysButtons>
      </TitleBar>
      <MenuBar>
        {['File', 'Data', 'Calculate', 'Options', 'Help'].map(m => <MenuItem key={m}><u>{m[0]}</u>{m.slice(1)}</MenuItem>)}
      </MenuBar>
      <ToolRow>
        <ToolGroup $w={170}>
          <B n="Layout" i={I.layout} /><Sep /><B n="New" i={I.page} d /><B n="Open" i={I.open} d /><B n="Save" i={I.save} /><Sep /><B n="Report" i={I.calcRed} /><B n="Attach" i={I.clip} />
        </ToolGroup>
        <ToolGroup $w={87}><B n="Run" i={I.runDoc} d /><Sep /><B n="Grid" i={I.fence} /><B n="Road" i={I.road} /></ToolGroup>
        <ToolGroup $w={50}><B n="Spans" i={I.spans} /><B n="Surface" i={I.surface} /></ToolGroup>
        <ToolGroup $w={146}>
          <B n="Analyse" i={I.play} /><Sep /><B n="Wave" i={I.wave} /><B n="Pulse" i={I.pulse} /><B n="Step" i={I.playOff} /><B n="Quick" i={I.bolt} /><B n="Envelope" i={I.waveOff} />
        </ToolGroup>
        <ToolGroup $w={72}><B n="Results" i={I.cubes} /><B n="Notes" i={I.note} /><B n="Sheet" i={I.sheetOff} /></ToolGroup>
        <ToolGroup $w={159}><B n="Help" i={I.helpRound} /><Sep /><Tool>{I.person}Nigel Maisvoreva<Caret /></Tool></ToolGroup>
      </ToolRow>
      <Main>
        <Sidebar>
          <SideTitle>Structure Definition</SideTitle>
          <SideTools><Tool aria-label="Export">{I.exit}<Caret /></Tool></SideTools>
          <Tree>
            {tree.map(([level, icon, label, open], r) => (
              <TreeRow key={label}>
                {Array.from({ length: level }, (_, c) => (
                  <Guide key={c} $kind={guideFor(r, c)}>
                    {open && c === level - 1 && <Expander aria-label={`Collapse ${label}`}><svg width="5" height="1"><path d="M0 0h5v1H0z" fill="#222" /></svg></Expander>}
                  </Guide>
                ))}
                <TreeIcon>{treeIcons[icon]}</TreeIcon>
                <TreeLabel $on={label === 'Sub Model Members'}>{label}</TreeLabel>
              </TreeRow>
            ))}
          </Tree>
          <Stages><StagesLink href="#stages">Open Construction Stages...</StagesLink></Stages>
          <Grip><svg width="36" height="3"><path d="M0 1h36" stroke="#20306c" strokeWidth="2" strokeDasharray="2 2" /><path d="M1 2.500h36" stroke="#fff" strokeDasharray="2 2" /></svg></Grip>
          {nav.map(([tone, label, icon]) => <NavItem key={label} $tone={tone}><Ic>{icon}</Ic>{label}</NavItem>)}
          <NavMore>
            <svg width="9" height="15" viewBox="0 0 9 15" fill="none" stroke="#111" strokeWidth="1.300"><path d="M1 1l2.500 2.500L1 6M5 1l2.500 2.500L5 6" /><path d="M2 10.500h5l-2.500 2.500z" fill="#111" stroke="none" /></svg>
          </NavMore>
        </Sidebar>
        <Desk>
          <Win $x={0} $y={0} $w={1541} $h={597}>
            <WinTitle $dim>{I.rainbow}<WinName>Structure</WinName><WinControls /></WinTitle>
            <ViewTools>
              <ToolGroup $w={28}><B n="Help" i={I.question} /></ToolGroup>
              <ToolGroup $w={51}><B n="Preview" i={I.preview} /><B n="Print" i={I.print} /></ToolGroup>
              <ToolGroup $w={271}>
                <B n="Pan" i={I.move} /><B n="Fit" i={I.rect} /><B n="Zoom in" i={I.zoomIn} /><B n="Zoom out" i={I.zoomOut} /><B n="Zoom window" i={I.zoomBox} /><Sep /><B n="Save view" i={I.saveView} d /><Sep /><B n="Previous view" i={I.backOff} /><Sep /><Tool>Set to 3D View</Tool>
              </ToolGroup>
              <ToolGroup $w={411}>
                <Words>Draw Mode:</Words>
                <B n="Line" i={draw.line} /><B n="Polyline" i={draw.poly} /><B n="Box" i={draw.box} /><B n="Triangle" i={draw.tri} /><B n="Pair" i={draw.pair} /><B n="Skew" i={draw.skew} /><Sep />
                <Words as="label" htmlFor="selmode">Select:</Words>
                <Combo>{I.incl}<Select id="selmode" defaultValue="Inclusive Box"><option>Inclusive Box</option></Select><ComboDrop><Caret /></ComboDrop></Combo>
                <Sep /><B n="Filter" i={I.filter} d />
              </ToolGroup>
            </ViewTools>
            <ViewBody>
              <CanvasBox><Drawing /></CanvasBox>
              <Tabs>
                <Tab><Swatch $c="#0a8a0a" />General</Tab>
                <Tab><Swatch $c="#7a0808" />Objects</Tab>
              </Tabs>
            </ViewBody>
          </Win>
          <Win $active $x={-1} $y={550} $w={791} $h={392}>
            <WinTitle>{I.link}<WinName>&nbsp;Define Sub Model Members</WinName><WinControls active /></WinTitle>
            <DialogBody>
              <Tasks>
                <TaskGroup title="Table Tasks" items={tableTasks} />
                <TaskGroup title="Member Tasks" items={memberTasks} />
              </Tasks>
              <GridBox>
                <GridView>
                  <DataTable>
                    <thead>
                      <tr>
                        <Th $w={48}><HeadCell>Ref.<svg width="8" height="8" fill="none" stroke="#999"><path d="M.5 7.500L4 .5l3.500 7z" /></svg></HeadCell></Th>
                        <Th $w={46}>Type</Th><Th $w={64} $num>Joint-1</Th><Th $w={64} $num>Joint-2</Th>
                      </tr>
                    </thead>
                    <tbody>
                      {rows.map(([a, b], i) => {
                        const on = i === 5;
                        return (
                          <tr key={i}>
                            <Td $on={on} $focus={on}>{i + 1}</Td><Td $on={on}>Beam</Td><Td $on={on} $num>{a}</Td><Td $on={on} $num>{b}</Td>
                          </tr>
                        );
                      })}
                    </tbody>
                  </DataTable>
                </GridView>
                <ScrollV><Arrow d="M1.500 7L5 3.500 8.500 7" /><Thumb /><Fill /><Arrow d="M1.500 3L5 6.500 8.500 3" /></ScrollV>
                <NavBar>
                  {recs.map(([n, d, c]) => <NavButton key={n} aria-label={n}><svg width="13" height="11" viewBox="0 0 13 11" fill={c} stroke={c} strokeWidth=".6"><path d={d} /></svg></NavButton>)}
                  <ScrollH><Arrow d="M7 1.500L3.500 5 7 8.500" c="#a8a8a8" /><Arrow d="M3 1.500L6.500 5 3 8.500" c="#a8a8a8" /></ScrollH>
                </NavBar>
                <NavBar />
              </GridBox>
            </DialogBody>
            <Footer>
              <Push $w={73}>{I.question}<span><u>H</u>elp</span></Push>
              <Push $w={73}>{I.ok}OK</Push>
              <Push $w={73}>{I.cancel}Cancel</Push>
              <Push $w={73}>{I.clear}Clear</Push>
              <Fill />
              <Push $w={96} disabled>{I.undo}Undo</Push>
              <Push $w={25} aria-label="Calculator">{I.calc}</Push>
            </Footer>
          </Win>
        </Desk>
      </Main>
    </Page>
  );
}
